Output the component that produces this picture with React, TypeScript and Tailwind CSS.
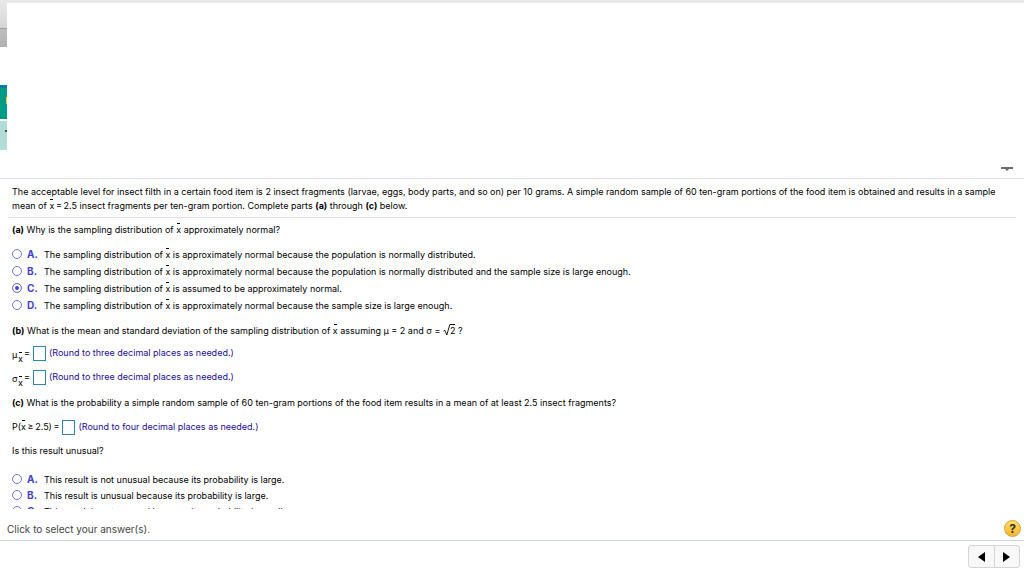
import React, { useState } from "react";

function XBar() {
  return (
    <span className="relative inline-block">
      x
      <span className="absolute left-px top-0 h-px w-[3px] bg-black"></span>
    </span>
  );
}

function Choice({
  name,
  letter,
  checked,
  onSelect,
  className,
  children,
}: {
  name: string;
  letter: string;
  checked: boolean;
  onSelect: (letter: string) => void;
  className: string;
  children: React.ReactNode;
}) {
  return (
    <label className={`flex items-center ${className}`}>
      <input
        type="radio"
        name={name}
        value={letter}
        checked={checked}
        onChange={() => onSelect(letter)}
        className="h-[10px] w-[10px] shrink-0 appearance-none rounded-full border border-[#6f78dc] bg-white checked:bg-[#3d47cf] checked:shadow-[inset_0_0_0_2px_#fff]"
      />
      <span className="ml-[5px] w-[17px] text-[10px] font-bold text-[#3f3fd3]">{letter}.</span>
      <span className="pt-0.5">{children}</span>
    </label>
  );
}

function AnswerBox({ label }: { label: string }) {
  return (
    <input
      type="text"
      aria-label={label}
      className="mx-[3px] h-[15px] w-[13px] shrink-0 border border-[#2a86ad] bg-white text-center outline-none"
    />
  );
}

function Statistic({ symbol, label }: { symbol: string; label: string }) {
  return (
    <div className="flex h-4 items-center">
      <span className="w-1.5 shrink-0 pt-1">{symbol}</span>
      <span className="w-[5px] shrink-0 pt-2.5 leading-[13px]">
        <XBar />
      </span>
      <span className="w-[7px] shrink-0 text-right">=</span>
      <AnswerBox label={label} />
      <span className="text-[#1d0c96]">(Round to three decimal places as needed.)</span>
    </div>
  );
}

function SquareRoot({ children }: { children: React.ReactNode }) {
  return (
    <span className="inline-flex h-3 items-start align-text-bottom">
      <svg width="7" height="12" viewBox="0 0 7 12" fill="none" stroke="#000" aria-hidden="true">
        <path d="M0.5 7 L1.8 6.3 L3.8 11 L6.8 0.5" strokeWidth="0.9" />
      </svg>
      <span className="h-3 border-t border-black leading-3">{children}</span>
    </span>
  );
}

export default function App() {
  const [reason, setReason] = useState("C");
  const [unusual, setUnusual] = useState("");

  return (
    <div className="flex h-screen flex-col overflow-hidden bg-white font-[Inter,'Liberation_Sans',sans-serif] text-[9px] leading-[14px] text-black">
      <header className="flex h-[179px] shrink-0 items-start border-b border-[#dfe2ee]">
        <div className="w-[7px] shrink-0">
          <div className="h-7 bg-linear-to-b from-[#e9e9e9] to-[#d6d6d6]"></div>
          <div className="h-[19px] border-t border-[#9f9f9f] bg-linear-to-b from-[#bebebe] to-[#b1b1b1]"></div>
          <div className="mt-[38px] h-[3px] bg-[#087ba3]"></div>
          <div className="flex h-[31px] items-start justify-end bg-[#009b86] pt-[9px]">
            <div className="h-[7px] w-px bg-[#e2d31c]"></div>
          </div>
          <div className="mt-0.5 flex h-[29px] items-start justify-end bg-[#b1dcd7] pt-[9px]">
            <div className="h-[2px] w-[2px] bg-[#3d4b42]"></div>
          </div>
        </div>
        <div className="flex flex-1 flex-col self-stretch border-t-[3px] border-[#e9e9e9]">
          <button type="button" aria-label="Collapse header" className="mr-[11px] mt-auto mb-1.5 self-end">
            <svg width="12" height="5" viewBox="0 0 12 5" className="block" aria-hidden="true">
              <path d="M0 0 H12 V2 H8 L6 4 L4 2 H0 Z" fill="#6b6b6b" />
            </svg>
          </button>
        </div>
      </header>

      <main className="min-h-0 flex-1 overflow-hidden px-2">
        <p className="border-b border-[#dfe2ee] pb-1 pl-1 pt-1.5">
          The acceptable level for insect filth in a certain food item is 2 insect fragments (larvae, eggs, body parts,
          and so on) per 10 grams. A simple random sample of 60 ten-gram portions of the food item is obtained and
          results in a sample mean of <XBar />
          &thinsp;=&thinsp;2.5 insect fragments per ten-gram portion. Complete parts <b>(a)</b> through <b>(c)</b>{" "}
          below.
        </p>

        <div className="pl-1">
          <p className="mt-[5px]">
            <b>(a)</b> Why is the sampling distribution of <XBar /> approximately normal?
          </p>
          <div className="mt-2">
            <Choice name="reason" letter="A" checked={reason === "A"} onSelect={setReason} className="h-[17px]">
              The sampling distribution of <XBar /> is approximately normal because the population is normally
              distributed.
            </Choice>
            <Choice name="reason" letter="B" checked={reason === "B"} onSelect={setReason} className="h-[17px]">
              The sampling distribution of <XBar /> is approximately normal because the population is normally
              distributed and the sample size is large enough.
            </Choice>
            <Choice name="reason" letter="C" checked={reason === "C"} onSelect={setReason} className="h-[17px]">
              The sampling distribution of <XBar /> is assumed to be approximately normal.
            </Choice>
            <Choice name="reason" letter="D" checked={reason === "D"} onSelect={setReason} className="h-[17px]">
              The sampling distribution of <XBar /> is approximately normal because the sample size is large enough.
            </Choice>
          </div>

          <p className="mt-[11px] h-[14px]">
            <b>(b)</b> What is the mean and standard deviation of the sampling distribution of <XBar /> assuming μ = 2
            and σ = <SquareRoot>2</SquareRoot> ?
          </p>
          <div className="mt-[7px] flex flex-col gap-2">
            <Statistic symbol="μ" label="Mean of x-bar" />
            <Statistic symbol="σ" label="Standard deviation of x-bar" />
          </div>

          <p className="mt-[11px]">
            <b>(c)</b> What is the probability a simple random sample of 60 ten-gram portions of the food item results
            in a mean of at least 2.5 insect fragments?
          </p>
          <div className="mt-[9px] flex h-4 items-center">
            <span>
              P(
              <XBar />
              &thinsp;≥&thinsp;2.5)&thinsp;=
            </span>
            <AnswerBox label="Probability" />
            <span className="text-[#1d0c96]">(Round to four decimal places as needed.)</span>
          </div>

          <p className="mt-[9px]">Is this result unusual?</p>
          <div className="mt-[13px]">
            <Choice name="unusual" letter="A" checked={unusual === "A"} onSelect={setUnusual} className="h-4">
              This result is not unusual because its probability is large.
            </Choice>
            <Choice name="unusual" letter="B" checked={unusual === "B"} onSelect={setUnusual} className="h-4">
              This result is unusual because its probability is large.
            </Choice>
            <Choice name="unusual" letter="C" checked={unusual === "C"} onSelect={setUnusual} className="h-4">
              This result is not unusual because its probability is small.
            </Choice>
          </div>
        </div>
      </main>

      <div className="mt-2 flex h-6 shrink-0 items-center justify-between border-b border-[#ccd3e3] pl-[7px] pr-[3px]">
        <span className="text-[10px] text-[#444]">Click to select your answer(s).</span>
        <button
          type="button"
          aria-label="Help"
          className="flex h-[17px] w-[17px] items-center justify-center rounded-full border border-[#c9a24a] bg-linear-to-b from-[#ffe05c] to-[#f7b52c] text-[12px] font-bold text-[#33302a]"
        >
          ?
        </button>
      </div>

      <footer className="flex h-[35px] shrink-0 items-start justify-end pr-1 pt-1">
        <div className="flex h-[23px] w-[52px] divide-x divide-[#d5d5d5] rounded-[3px] border border-[#d5d5d5] bg-[#f8f8f8]">
          <button type="button" aria-label="Previous" className="flex flex-1 items-center justify-center">
            <svg width="7" height="10" viewBox="0 0 7 10" aria-hidden="true">
              <path d="M7 0 V10 L0 5 Z" />
            </svg>
          </button>
          <button type="button" aria-label="Next" className="flex flex-1 items-center justify-center">
            <svg width="7" height="10" viewBox="0 0 7 10" aria-hidden="true">
              <path d="M0 0 V10 L7 5 Z" />
            </svg>
          </button>
        </div>
      </footer>
    </div>
  );
}
